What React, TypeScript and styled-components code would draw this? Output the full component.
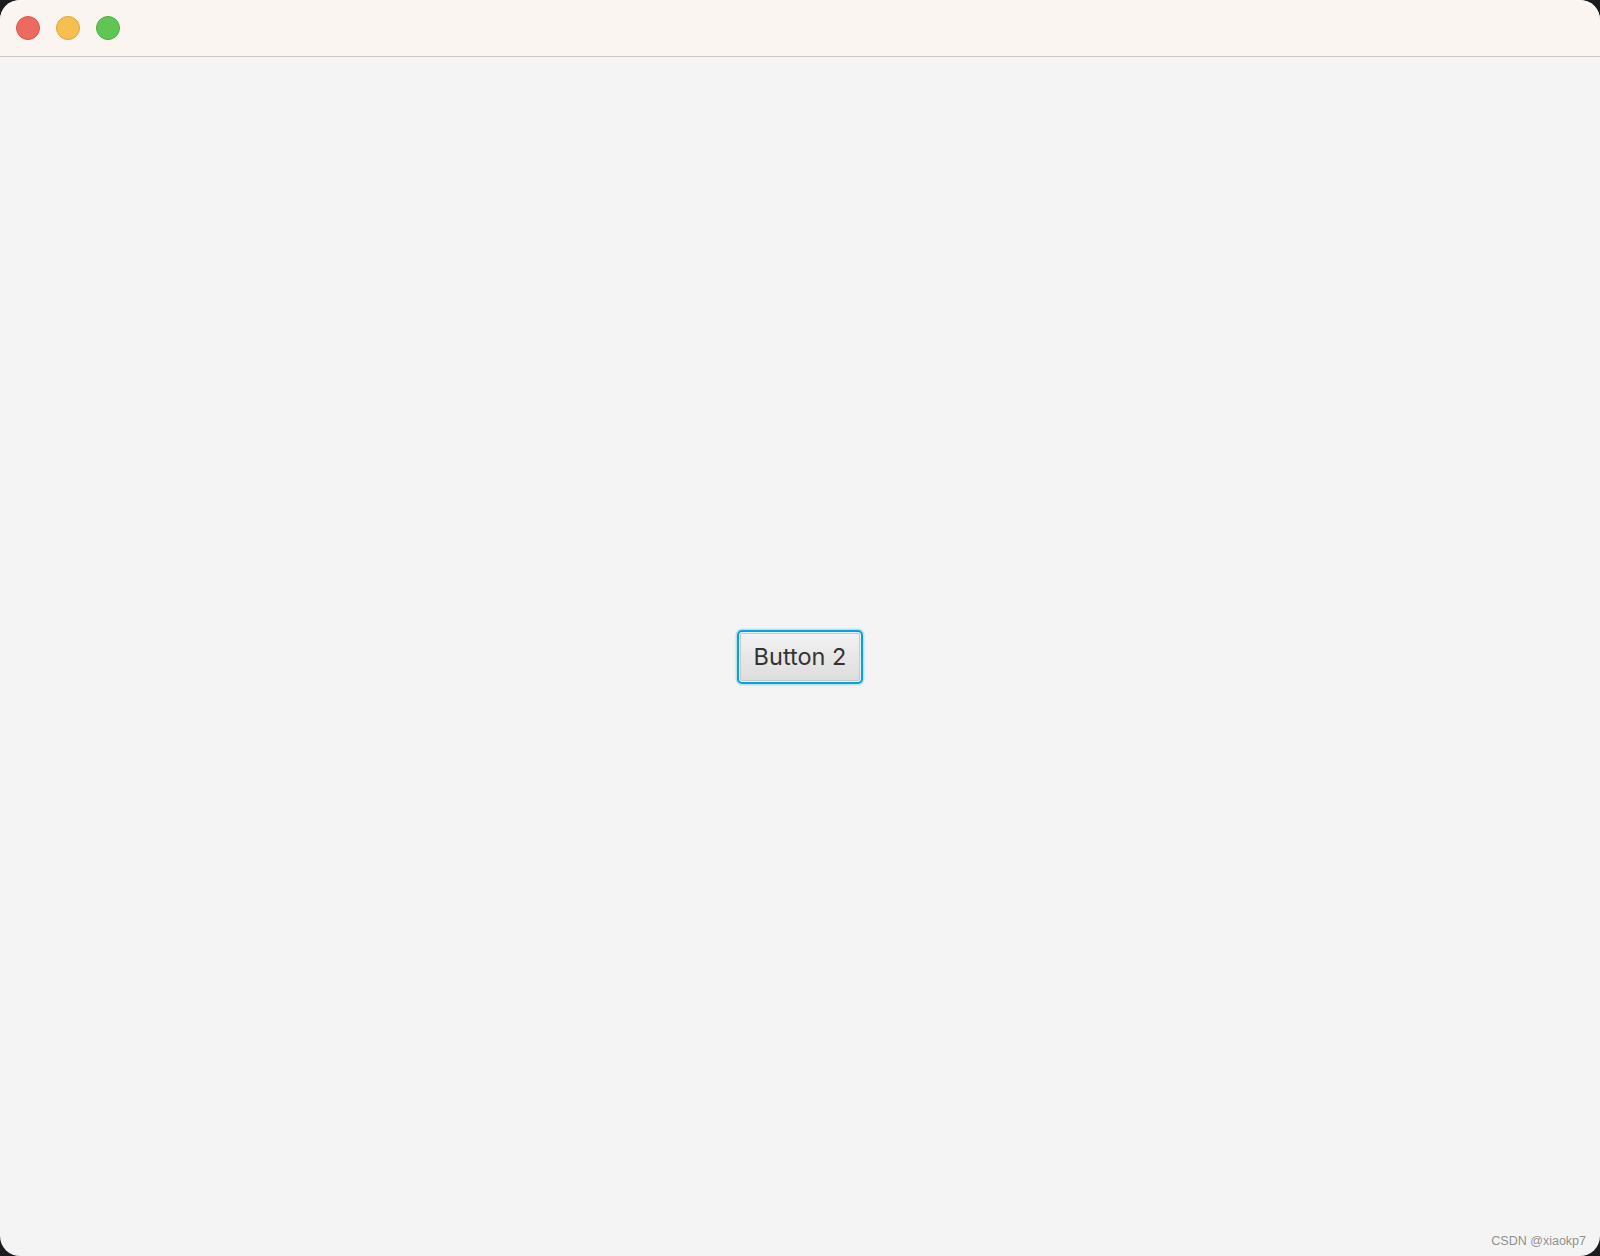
import styled, { createGlobalStyle } from 'styled-components';

const GlobalStyle = createGlobalStyle`
  html, body {
    margin: 0;
    padding: 0;
    background: #1c1c1e;
  }
  #root {
    height: 1256px;
  }
`;

const App = () => {
  return (
    <>
      <GlobalStyle />
      <Window>
        <TitleBar>
          <Light color="#ee6a5f" edge="#d5574d" />
          <Light color="#f6bf50" edge="#dca53b" />
          <Light color="#61c554" edge="#4fae43" />
        </TitleBar>
        <Content>
          <FxButton>Button 2</FxButton>
        </Content>
        <Watermark>CSDN @xiaokp7</Watermark>
      </Window>
    </>
  );
};

export default App;

const Window = styled.div`
  position: relative;
  display: flex;
  flex-direction: column;
  height: 100%;
  border-radius: 20px;
  overflow: hidden;
  background-color: #f4f4f4;
  font-family: Inter, 'Noto Sans', sans-serif;
`;

const TitleBar = styled.div`
  display: flex;
  align-items: center;
  gap: 16px;
  height: 57px;
  padding: 0 16px 1px;
  box-sizing: border-box;
  flex-shrink: 0;

  background-color: #faf5f0;
  border-bottom: 1px solid #cbc9c7;
`;

const Light = styled.div<{ color: string; edge: string }>`
  width: 24px;
  height: 24px;
  border-radius: 50%;
  box-sizing: border-box;
  background-color: ${(p) => p.color};
  border: 1px solid ${(p) => p.edge};
`;

const Content = styled.div`
  flex: 1;
  display: flex;
  align-items: center;
  justify-content: center;
`;

const FxButton = styled.button`
  height: 54px;
  padding: 0 15px;
  box-sizing: border-box;

  font-family: Inter, 'Noto Sans', sans-serif;
  font-size: 23.5px;
  color: #333333;

  border: 2px solid #06a2dc;
  border-radius: 5px;
  background: linear-gradient(#f3f3f3, #dcdcdc);
  box-shadow: inset 0 0 0 1px #e6f3fa, inset 0 0 0 2px #c9c9c9,
    0 0 0 1.5px rgba(3, 158, 211, 0.22);
  outline: none;
`;

const Watermark = styled.div`
  position: absolute;
  right: 14px;
  bottom: 8px;

  font-family: 'Liberation Sans', Arial, sans-serif;
  font-size: 12.5px;
  color: #8e8e8e;
  text-shadow: 0 0 2px #ffffff;
`;
